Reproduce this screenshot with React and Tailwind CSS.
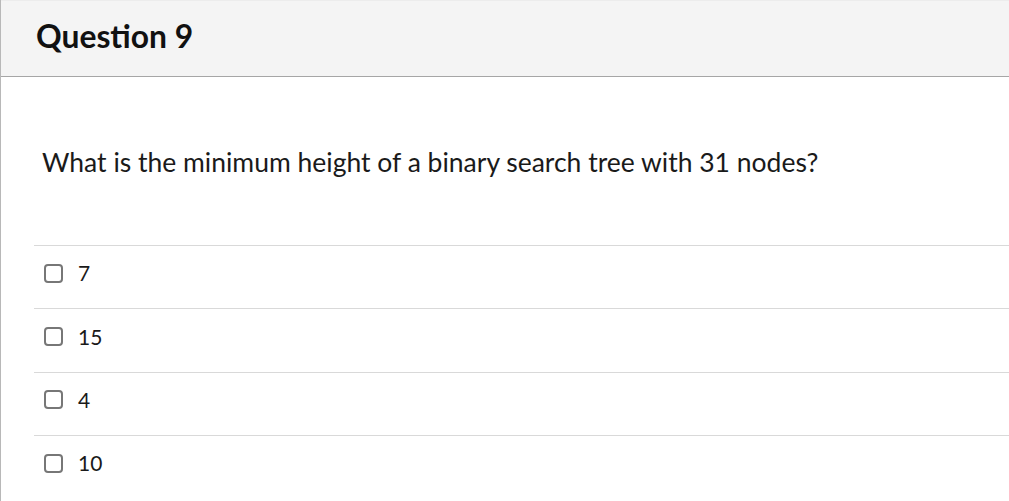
export default function App() {
  const answers = ['7', '15', '4', '10'];

  return (
    <div
      className="w-[1009px] h-[501px] overflow-hidden bg-white border-l border-[#b8b8b8]"
      style={{ fontFamily: 'Lato, "Open Sans", sans-serif' }}
    >
      <div className="h-[77px] bg-[#f4f4f4] border-b border-[#a6a6a6] border-t border-t-[#ececec] flex items-center pl-[35px]">
        <h2 className="text-[31.8px] font-bold text-[#111] leading-none mt-[-3px]">Question 9</h2>
      </div>

      <div className="pl-[33px]">
        <p className="text-[26.5px] text-[#1a1a1a] pl-[8px] pt-[70px] pb-[68px] leading-[30px]">
          What is the minimum height of a binary search tree with 31 nodes?
        </p>

        <div>
          {answers.map((a) => (
            <label
              key={a}
              className="h-[63.3px] border-t border-[#d9d9d9] flex items-center gap-[15px] pl-[10px] pb-[8px] text-[21px] text-[#1a1a1a]"
            >
              <span className="w-[19px] h-[19px] rounded-[4px] border-2 border-[#777] bg-white shrink-0" />
              <span>{a}</span>
            </label>
          ))}
        </div>
      </div>
    </div>
  );
}
